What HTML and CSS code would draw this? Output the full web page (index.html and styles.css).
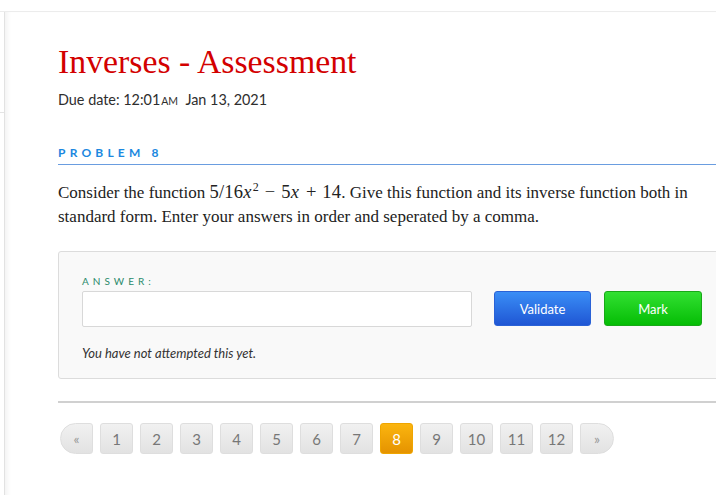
FILE: index.html
```html
<!DOCTYPE html>
<html>
<head>
<meta charset="utf-8">
<link rel="stylesheet" href="styles.css">
</head>
<body>
<div class="layout">
  <div class="rail"></div>
  <main class="main">
    <div class="content">
      <h1 class="title">Inverses - Assessment</h1>
      <div class="due">Due date: 12:01<span class="ampm">AM</span> Jan 13, 2021</div>
      <h2 class="problem">PROBLEM 8</h2>
      <p class="question"><span>Consider the function </span><span class="math">5/16<i>x</i><sup>2</sup> <span class="op">−</span> 5<i>x</i> <span class="op">+</span> 14</span><span>. Give this function and its inverse function both in</span> <span>standard form. Enter your answers in order and seperated by a comma.</span></p>
      <div class="answer-box">
        <div class="answer-label">ANSWER:</div>
        <div class="answer-row">
          <input class="answer-input" type="text">
          <button class="btn btn-validate">Validate</button>
          <button class="btn btn-mark">Mark</button>
        </div>
        <div class="status">You have not attempted this yet.</div>
      </div>
      <div class="divider"></div>
      <nav class="pager">
        <span class="pg pg-first">«</span>
        <span class="pg">1</span>
        <span class="pg">2</span>
        <span class="pg">3</span>
        <span class="pg">4</span>
        <span class="pg">5</span>
        <span class="pg">6</span>
        <span class="pg">7</span>
        <span class="pg pg-active">8</span>
        <span class="pg">9</span>
        <span class="pg">10</span>
        <span class="pg">11</span>
        <span class="pg">12</span>
        <span class="pg pg-last">»</span>
      </nav>
    </div>
  </main>
</div>
</body>
</html>
```
FILE: styles.css
```css
html, body {
  margin: 0;
  padding: 0;
  overflow: hidden;
  background: #fff;
}
body {
  font-family: Lato, "Open Sans", sans-serif;
  color: #333;
  padding-top: 11px;
  height: 484px;
}
.layout {
  display: flex;
  border-top: 1px solid #ececec;
  height: 100%;
}
.rail {
  width: 4px;
  height: 100px;
  border-bottom: 1px solid #e4e4e4;
  flex: none;
}
.main {
  flex: none;
  border-left: 1px solid #e2e2e2;
  box-shadow: inset 5px 0 5px -3px rgba(0,0,0,0.06);
  padding-left: 53px;
  padding-top: 30px;
}
.content {
  width: 690px;
}
.title {
  margin: 0;
  font-family: "Liberation Serif", "Times New Roman", serif;
  font-weight: normal;
  font-size: 33.8px;
  line-height: 40px;
  color: #d30000;
}
.due {
  margin-top: 8px;
  font-size: 14.4px;
  line-height: 20px;
  color: #2e2e2e;
}
.ampm {
  font-size: 10.5px;
  margin-left: 1px;
  margin-right: 4px;
}
.problem {
  margin: 34px 0 0;
  font-size: 12px;
  font-weight: bold;
  line-height: 16px;
  letter-spacing: 4.2px;
  color: #1c88e0;
  padding-bottom: 3px;
  border-bottom: 1px solid #6a9de0;
}
.question {
  margin: 15px 0 0;
  font-family: "Liberation Serif", "Times New Roman", serif;
  font-size: 17px;
  line-height: 24px;
  color: #222;
  width: 650px;
}
.math {
  font-size: 18.5px;
  letter-spacing: 0.2px;
}
.math i {
  padding-right: 1px;
}
.math sup {
  font-size: 12px;
  vertical-align: 7px;
  line-height: 0;
}
.op {
  padding: 0 1px;
}
.answer-box {
  margin-top: 22px;
  background: #f9f9f9;
  border: 1px solid #dcdcdc;
  border-radius: 3px;
  padding: 23px 23px 16px;
}
.answer-label {
  font-size: 10px;
  line-height: 12px;
  letter-spacing: 4px;
  color: #2a8a6a;
}
.answer-row {
  margin-top: 4px;
  display: flex;
  align-items: flex-start;
}
.answer-input {
  width: 390px;
  height: 36px;
  box-sizing: border-box;
  border: 1px solid #d8d8d8;
  border-radius: 2px;
  background: #fff;
  margin: 0;
  padding: 0 8px;
}
.btn {
  height: 35px;
  width: 98px;
  box-sizing: border-box;
  border-radius: 3px;
  color: #fff;
  font-family: Lato, "Open Sans", sans-serif;
  font-size: 13px;
  margin: 0;
  padding: 0;
}
.btn-validate {
  margin-left: 22px;
  width: 97px;
  background: linear-gradient(#3a8ef6, #1f56d4);
  border: 1px solid #2a62d6;
}
.btn-mark {
  margin-left: 13px;
  background: linear-gradient(#32e032, #05bd05);
  border: 1px solid #18a818;
}
.status {
  margin-top: 17px;
  font-size: 13px;
  line-height: 18px;
  font-style: italic;
  color: #333;
}
.divider {
  margin-top: 22px;
  height: 2px;
  background: #d0d0d0;
}
.pager {
  margin: 20px 0 0 2px;
  display: flex;
  gap: 7px;
}
.pg {
  width: 33px;
  height: 31px;
  box-sizing: border-box;
  display: flex;
  align-items: center;
  justify-content: center;
  border: 1px solid #dedede;
  border-radius: 3px;
  background: linear-gradient(#f1f1f1, #e2e2e2);
  color: #777;
  font-size: 15px;
}
.pg-first {
  border-radius: 16px 3px 3px 16px;
  color: #999;
  font-size: 14px;
}
.pg-last {
  width: 34px;
  border-radius: 3px 16px 16px 3px;
  color: #999;
  font-size: 14px;
}
.pg-active {
  background: linear-gradient(#fbb50f, #e59300);
  border-color: #efa500;
  color: #fff;
}
```
